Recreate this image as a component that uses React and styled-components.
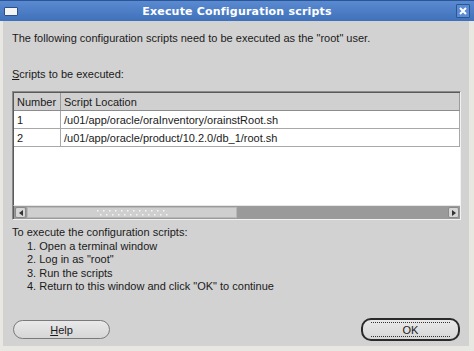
import React from 'react';
import styled, { createGlobalStyle } from 'styled-components';

const GlobalStyle = createGlobalStyle`
  html, body {
    margin: 0;
    padding: 0;
    background: #e9e7e1;
  }
  body {
    font-family: 'Liberation Sans', Arial, sans-serif;
  }
`;

const Window = styled.div`
  width: 474px;
  height: 351px;
  display: flex;
  flex-direction: column;
  background: #e9e7e1;
  box-sizing: border-box;
  overflow: hidden;
`;

const TitleBar = styled.div`
  height: 21px;
  flex: none;
  display: flex;
  align-items: center;
  padding: 0 4px;
  background: linear-gradient(#5a8ad0, #3f71bb);
  border-top: 1px solid #2c5597;
  box-sizing: border-box;
`;

const MenuIcon = styled.div`
  width: 12px;
  height: 7px;
  background: #f4f4f4;
  border: 1px solid #2b4f8a;
  border-radius: 1px;
  flex: none;
`;

const Title = styled.div`
  flex: 1;
  text-align: center;
  color: #ffffff;
  font-family: 'DejaVu Sans', sans-serif;
  font-weight: bold;
  font-size: 11px;
  letter-spacing: 0.2px;
`;

const CloseButton = styled.div`
  width: 14px;
  height: 14px;
  flex: none;
  display: flex;
  align-items: center;
  justify-content: center;
  border: 1px solid #2c5597;
  background: #5b8bd0;
  box-sizing: border-box;
  border-radius: 1px;
`;

const Body = styled.div`
  flex: 1;
  margin: 0 5px 5px 3px;
  background: #d2d2d2;
  padding: 11px 6px 0 9px;
  display: flex;
  flex-direction: column;
  font-size: 11px;
  color: #1a1a1a;
`;

const Text = styled.div`
  line-height: 13.5px;
  margin-top: ${(p) => p.$top || 0}px;
`;

const Underline = styled.span`
  text-decoration: underline;
`;

const TableBox = styled.div`
  margin-top: 10px;
  height: 129px;
  width: 449px;
  flex: none;
  box-sizing: border-box;
  border: 1px solid #8a8a8a;
  border-right-color: #f2f2f2;
  border-bottom-color: #f2f2f2;
  background: #ffffff;
  display: flex;
  flex-direction: column;
`;

const Grid = styled.div`
  flex: 1;
  display: grid;
  grid-template-columns: 47px 1fr;
  grid-auto-rows: 18px;
  align-content: start;
  border-left: 1px solid #5a5a5a;
  border-top: 1px solid #5a5a5a;
`;

const HeadCell = styled.div`
  background: #d0d0d0;
  border-right: 1px solid #9a9a9a;
  border-bottom: 1px solid #8c8c8c;
  padding-left: 3px;
  display: flex;
  align-items: center;
  box-sizing: border-box;
`;

const Cell = styled.div`
  border-right: 1px solid #a8a8a8;
  border-bottom: 1px solid #a8a8a8;
  padding-left: 3px;
  display: flex;
  align-items: center;
  box-sizing: border-box;
`;

const ScrollBar = styled.div`
  height: 14px;
  flex: none;
  display: flex;
  background: #9a9a9a;
  border-top: 1px solid #e6e6e6;
  border-left: 1px solid #5a5a5a;
  padding: 1px;
  box-sizing: border-box;
  align-items: stretch;
`;

const Arrow = styled.div`
  width: 11px;
  flex: none;
  background: #d6d6d6;
  border: 1px solid #8a8a8a;
  border-radius: 2px;
  display: flex;
  align-items: center;
  justify-content: center;
  box-sizing: border-box;
`;

const Thumb = styled.div`
  width: 210px;
  flex: none;
  margin-left: 1px;
  background: #cfcfcf;
  border: 1px solid #b8b8b8;
  display: flex;
  align-items: center;
  justify-content: center;
  box-sizing: border-box;
`;

const Track = styled.div`
  flex: 1;
`;

const Steps = styled.div`
  padding-left: 15px;
`;

const ButtonRow = styled.div`
  margin-top: auto;
  padding: 0 3px 5px 1px;
  display: flex;
  justify-content: space-between;
  align-items: center;
`;

const Button = styled.div`
  width: ${(p) => (p.$default ? 99 : 97)}px;
  height: ${(p) => (p.$default ? 23 : 19)}px;
  box-sizing: border-box;
  border: ${(p) => (p.$default ? '2px solid #2a2a2a' : '1px solid #7a7a7a')};
  border-radius: 10px;
  background: linear-gradient(#e9e9e9, #d6d6d6);
  display: flex;
  align-items: center;
  justify-content: center;
  padding: 2px 8px;
  font-size: 11px;
  color: #1a1a1a;
`;

const Focus = styled.div`
  flex: 1;
  align-self: stretch;
  display: flex;
  align-items: center;
  justify-content: center;
  border-top: 1px dotted #333;
  border-bottom: 1px dotted #333;
`;

const Grip = () => (
  <svg width="72" height="8" viewBox="0 0 72 8">
    {Array.from({ length: 12 }).map((_, i) => (
      <g key={i}>
        <rect x={i * 6 + 1} y="1" width="1.5" height="1.5" fill="#f5f5f5" />
        <rect x={i * 6 + 4} y="5" width="1.5" height="1.5" fill="#f5f5f5" />
      </g>
    ))}
  </svg>
);

const App = () => (
  <>
    <GlobalStyle />
    <Window>
      <TitleBar>
        <MenuIcon />
        <Title>Execute Configuration scripts</Title>
        <CloseButton>
          <svg width="8" height="8" viewBox="0 0 8 8">
            <path d="M1 1L7 7M7 1L1 7" stroke="#ffffff" strokeWidth="2" />
          </svg>
        </CloseButton>
      </TitleBar>
      <Body>
        <Text>The following configuration scripts need to be executed as the "root" user.</Text>
        <Text $top={22}>
          <Underline>S</Underline>cripts to be executed:
        </Text>
        <TableBox>
          <Grid>
            <HeadCell>Number</HeadCell>
            <HeadCell>Script Location</HeadCell>
            <Cell>1</Cell>
            <Cell>/u01/app/oracle/oraInventory/orainstRoot.sh</Cell>
            <Cell>2</Cell>
            <Cell>/u01/app/oracle/product/10.2.0/db_1/root.sh</Cell>
          </Grid>
          <ScrollBar>
            <Arrow>
              <svg width="4" height="6" viewBox="0 0 4 6">
                <path d="M4 0L0 3L4 6Z" fill="#333" />
              </svg>
            </Arrow>
            <Thumb>
              <Grip />
            </Thumb>
            <Track />
            <Arrow>
              <svg width="4" height="6" viewBox="0 0 4 6">
                <path d="M0 0L4 3L0 6Z" fill="#333" />
              </svg>
            </Arrow>
          </ScrollBar>
        </TableBox>
        <Text $top={6}>To execute the configuration scripts:</Text>
        <Steps>
          <Text>1. Open a terminal window</Text>
          <Text>2. Log in as "root"</Text>
          <Text>3. Run the scripts</Text>
          <Text>4. Return to this window and click "OK" to continue</Text>
        </Steps>
        <ButtonRow>
          <Button>
            <span>
              <Underline>H</Underline>elp
            </span>
          </Button>
          <Button $default>
            <Focus>OK</Focus>
          </Button>
        </ButtonRow>
      </Body>
    </Window>
  </>
);

export default App;
